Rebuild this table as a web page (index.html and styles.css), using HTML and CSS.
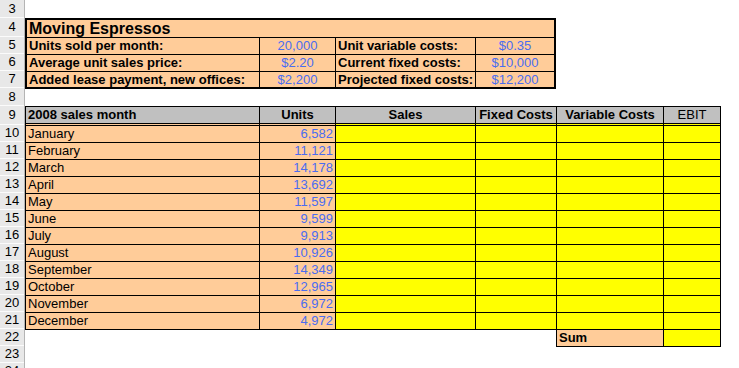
FILE: index.html
```html
<!DOCTYPE html>
<html>
<head>
<meta charset="utf-8">
<link rel="stylesheet" href="styles.css">
</head>
<body>
<div class="sheet">
  <div class="heads">
    <div class="rh h18">3</div>
    <div class="rh h19">4</div>
    <div class="rh">5</div>
    <div class="rh">6</div>
    <div class="rh">7</div>
    <div class="rh h18">8</div>
    <div class="rh h19">9</div>
    <div class="rh">10</div>
    <div class="rh">11</div>
    <div class="rh">12</div>
    <div class="rh">13</div>
    <div class="rh">14</div>
    <div class="rh">15</div>
    <div class="rh">16</div>
    <div class="rh">17</div>
    <div class="rh">18</div>
    <div class="rh">19</div>
    <div class="rh">20</div>
    <div class="rh">21</div>
    <div class="rh">22</div>
    <div class="rh">23</div>
    <div class="rh">24</div>
  </div>
  <div class="cells">
    <div class="gap18"></div>
    <div class="box">
      <div class="title">Moving Espressos</div>
      <div class="brow">
        <div class="c ca b">Units sold per month:</div>
        <div class="c cb num ctr">20,000</div>
        <div class="c cc b">Unit variable costs:</div>
        <div class="c cd num ctr">$0.35</div>
      </div>
      <div class="brow">
        <div class="c ca b">Average unit sales price:</div>
        <div class="c cb num ctr">$2.20</div>
        <div class="c cc b">Current fixed costs:</div>
        <div class="c cd num ctr">$10,000</div>
      </div>
      <div class="brow last">
        <div class="c ca b">Added lease payment, new offices:</div>
        <div class="c cb num ctr">$2,200</div>
        <div class="c cc b">Projected fixed costs:</div>
        <div class="c cd num ctr">$12,200</div>
      </div>
    </div>
    <div class="gap17"></div>
    <div class="table">
      <div class="trow head">
        <div class="t ta b">2008 sales month</div>
        <div class="t tb b ctr">Units</div>
        <div class="t tc b ctr">Sales</div>
        <div class="t td b ctr">Fixed Costs</div>
        <div class="t te b ctr">Variable Costs</div>
        <div class="t tf ctr">EBIT</div>
      </div>
      <div class="trow first">
        <div class="t ta">January</div><div class="t tb num rt">6,582</div><div class="t tc y"></div><div class="t td y"></div><div class="t te y"></div><div class="t tf y"></div>
      </div>
      <div class="trow">
        <div class="t ta">February</div><div class="t tb num rt">11,121</div><div class="t tc y"></div><div class="t td y"></div><div class="t te y"></div><div class="t tf y"></div>
      </div>
      <div class="trow">
        <div class="t ta">March</div><div class="t tb num rt">14,178</div><div class="t tc y"></div><div class="t td y"></div><div class="t te y"></div><div class="t tf y"></div>
      </div>
      <div class="trow">
        <div class="t ta">April</div><div class="t tb num rt">13,692</div><div class="t tc y"></div><div class="t td y"></div><div class="t te y"></div><div class="t tf y"></div>
      </div>
      <div class="trow">
        <div class="t ta">May</div><div class="t tb num rt">11,597</div><div class="t tc y"></div><div class="t td y"></div><div class="t te y"></div><div class="t tf y"></div>
      </div>
      <div class="trow">
        <div class="t ta">June</div><div class="t tb num rt">9,599</div><div class="t tc y"></div><div class="t td y"></div><div class="t te y"></div><div class="t tf y"></div>
      </div>
      <div class="trow">
        <div class="t ta">July</div><div class="t tb num rt">9,913</div><div class="t tc y"></div><div class="t td y"></div><div class="t te y"></div><div class="t tf y"></div>
      </div>
      <div class="trow">
        <div class="t ta">August</div><div class="t tb num rt">10,926</div><div class="t tc y"></div><div class="t td y"></div><div class="t te y"></div><div class="t tf y"></div>
      </div>
      <div class="trow">
        <div class="t ta">September</div><div class="t tb num rt">14,349</div><div class="t tc y"></div><div class="t td y"></div><div class="t te y"></div><div class="t tf y"></div>
      </div>
      <div class="trow">
        <div class="t ta">October</div><div class="t tb num rt">12,965</div><div class="t tc y"></div><div class="t td y"></div><div class="t te y"></div><div class="t tf y"></div>
      </div>
      <div class="trow">
        <div class="t ta">November</div><div class="t tb num rt">6,972</div><div class="t tc y"></div><div class="t td y"></div><div class="t te y"></div><div class="t tf y"></div>
      </div>
      <div class="trow">
        <div class="t ta">December</div><div class="t tb num rt">4,972</div><div class="t tc y"></div><div class="t td y"></div><div class="t te y"></div><div class="t tf y"></div>
      </div>
      <div class="sumrow">
        <div class="spacer"></div>
        <div class="t sum b">Sum</div>
        <div class="t tf y"></div>
      </div>
    </div>
  </div>
</div>
</body>
</html>
```

FILE: styles.css
```css
* { box-sizing: border-box; }
html, body { margin: 0; padding: 0; background: #fff; }
body {
  font-family: "Liberation Sans", Arial, sans-serif;
  font-size: 13px;
  color: #000;
  overflow: hidden;
}
.sheet {
  display: grid;
  grid-template-columns: 25px 1fr;
  align-items: start;
}
.heads {
  display: flex;
  flex-direction: column;
  background: #e8e8e8;
  border-right: 1px solid #b4b4b4;
}
.rh {
  height: 17px;
  line-height: 16px;
  text-align: center;
  border-bottom: 1px solid #fbfbfb;
  font-size: 13px;
}
.rh.h18 { height: 18px; line-height: 17px; }
.rh.h19 { height: 19px; line-height: 18px; }

.cells { display: flex; flex-direction: column; }
.gap18 { height: 18px; }
.gap17 { height: 17px; }

.box {
  width: 531px;
  border: 2px solid #000;
  background: #ffcc99;
  display: flex;
  flex-direction: column;
}
.title {
  height: 18px;
  line-height: 17px;
  font-size: 16px;
  font-weight: bold;
  padding-left: 2px;
  border-bottom: 1px solid #000;
}
.brow { display: flex; height: 17px; border-bottom: 1px solid #000; }
.brow.last { height: 15px; border-bottom: none; }
.c {
  line-height: 16px;
  padding: 0 2px;
  white-space: nowrap;
  overflow: hidden;
}
.brow.last .c { line-height: 15px; }
.ca { width: 233px; border-right: 1px solid #000; }
.cb { width: 76px; border-right: 1px solid #000; }
.cc { width: 140px; border-right: 1px solid #000; }
.cd { width: 78px; }

.b { font-weight: bold; }
.ctr { text-align: center; }
.rt { text-align: right; }
.num { color: #4a6cf0; }

.table { display: flex; flex-direction: column; }
.trow { display: flex; height: 17px; }
.trow .t { border-bottom: 1px solid #000; }
.trow.head { height: 17px; }
.trow.head .t {
  background: #c0c0c0;
  border-top: 1px solid #000;
  border-bottom: none;
  line-height: 16px;
}
.trow.first { height: 20px; }
.trow.first .t { border-top: 3px double #000; }
.t {
  line-height: 16px;
  padding: 0 2px;
  white-space: nowrap;
  overflow: hidden;
  border-right: 1px solid #000;
  background: #ffcc99;
}
.ta { width: 235px; border-left: 1px solid #000; }
.tb { width: 76px; }
.tc { width: 140px; }
.td { width: 81px; }
.te { width: 107px; }
.tf { width: 57px; }
.y { background: #ffff00; }

.sumrow { display: flex; height: 17px; }
.spacer { width: 531px; }
.sumrow .t { border-bottom: 1px solid #000; }
.sum { width: 108px; border-left: 1px solid #000; }
```
